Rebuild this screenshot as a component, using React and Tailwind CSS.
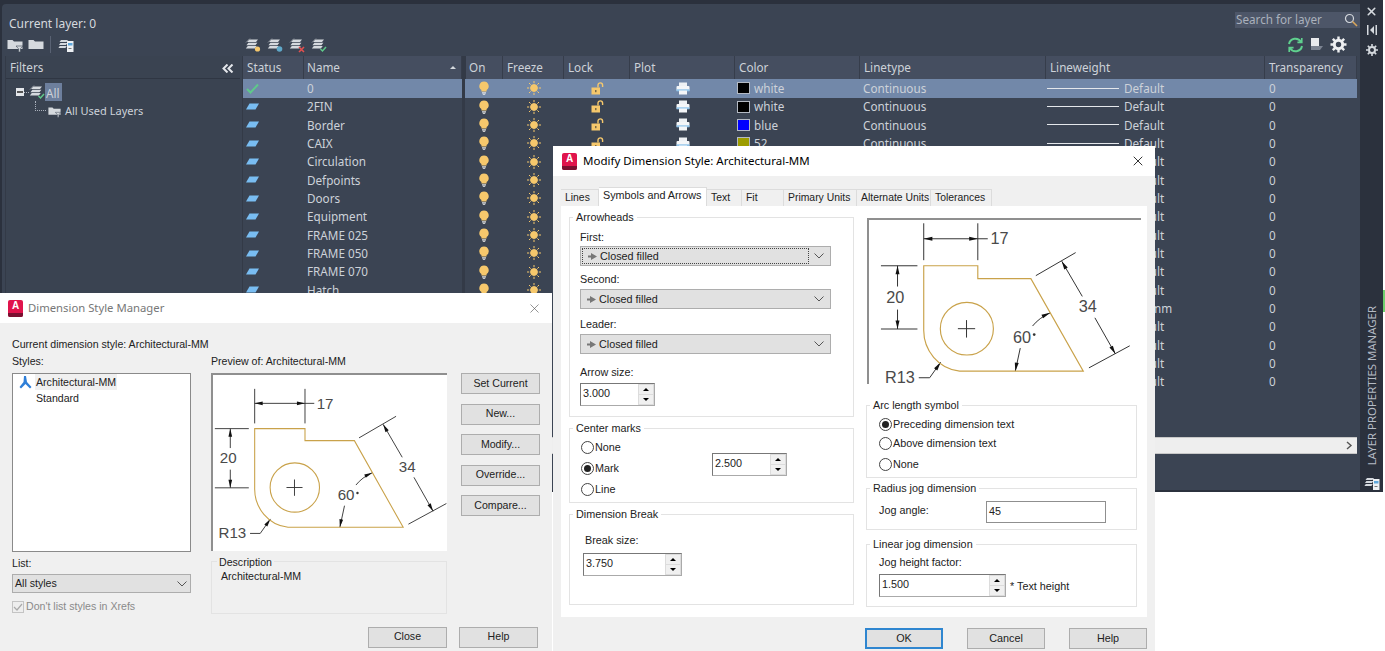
import React from "react";
import { X } from "lucide-react";

const layers = [
  ["0", "white", "bg-black", "Default"],
  ["2FIN", "white", "bg-black", "Default"],
  ["Border", "blue", "bg-[#0000ff]", "Default"],
  ["CAIX", "52", "bg-[#9c9c00]", "Default"],
  ["Circulation", "white", "bg-black", "Default"],
  ["Defpoints", "white", "bg-black", "Default"],
  ["Doors", "white", "bg-black", "Default"],
  ["Equipment", "white", "bg-black", "Default"],
  ["FRAME 025", "white", "bg-black", "Default"],
  ["FRAME 050", "white", "bg-black", "Default"],
  ["FRAME 070", "white", "bg-black", "Default"],
  ["Hatch", "white", "bg-black", "Default"],
  ["", "white", "bg-black", "0.25 mm"],
  ["", "white", "bg-black", "Default"],
  ["", "white", "bg-black", "Default"],
  ["", "white", "bg-black", "Default"],
  ["", "white", "bg-black", "Default"],
];

const COLS = "grid grid-cols-[61px_158px_3px_38px_61px_66px_105px_125px_186px_219px_92px]";

const Bulb = () => (
  <svg width="12" height="14" viewBox="0 0 12 14">
    <path d="M6 0.5a4.7 4.7 0 0 1 2.6 8.6V10.5H3.4V9.1A4.7 4.7 0 0 1 6 0.5z" fill="#f6c86c" />
    <rect x="4" y="11.3" width="4" height="1.2" fill="#e8e8e8" />
    <rect x="4.8" y="12.8" width="2.4" height="1" fill="#e8e8e8" />
  </svg>
);

const Sun = () => (
  <svg width="14" height="14" viewBox="0 0 14 14" stroke="#f6c86c" strokeWidth="1">
    <circle cx="7" cy="7" r="3.4" fill="#f6c86c" />
    <path d="M7 0v2.2M7 11.8V14M0 7h2.2M11.8 7H14M2 2l1.6 1.6M10.4 10.4L12 12M2 12l1.6-1.6M10.4 3.6L12 2" />
  </svg>
);

const OpenLock = () => (
  <svg width="13" height="13" viewBox="0 0 13 13">
    <rect x="0.5" y="5.5" width="8.5" height="7" fill="#f6c86c" />
    <path d="M7 5.5V3.2a2.3 2.3 0 0 1 4.6 0V5" fill="none" stroke="#f6c86c" strokeWidth="1.4" />
    <rect x="4" y="8" width="1.5" height="2.2" fill="#7a6a45" />
  </svg>
);

const Printer = () => (
  <svg width="14" height="13" viewBox="0 0 14 13">
    <rect x="3" y="0.5" width="8" height="3.5" fill="#eef1f4" />
    <rect x="0.5" y="4" width="13" height="5" rx="1" fill="#f4f6f8" />
    <rect x="0.5" y="7.3" width="13" height="2" fill="#8fc4ea" />
    <rect x="3" y="8.5" width="8" height="4" fill="#f4f6f8" />
  </svg>
);

const StatusIcon = ({ current }) =>
  current ? (
    <svg width="13" height="11" viewBox="0 0 13 11">
      <path d="M1 6l3.5 3.5L12 1.5" fill="none" stroke="#5fc98a" strokeWidth="2" />
    </svg>
  ) : (
    <svg width="13" height="7" viewBox="0 0 13 7">
      <path d="M3.5 0.5H13L9.5 6.5H0z" fill="#79bdf2" />
    </svg>
  );

// stacked sheets used all over the layer palette toolbar
const Stack = ({ badge }) => (
  <svg width="16" height="16" viewBox="0 0 16 15">
    <path d="M4 2h9l-2 2.4H2zM3.4 5.3h9l-2 2.4h-9zM2.8 8.6h9l-2 2.4h-9z" fill="#d5d9de" />
    <path d="M1 5L5 1" stroke="#8c929c" strokeWidth="1" />
    {badge === "sun" && <circle cx="12.5" cy="11.5" r="2.6" fill="#f6c86c" />}
    {badge === "globe" && <circle cx="12.5" cy="11.5" r="2.8" fill="#5fa8c9" />}
    {badge === "del" && <path d="M10 9.5l5 5M15 9.5l-5 5" stroke="#e2504f" strokeWidth="1.6" />}
    {badge === "check" && <path d="M9.5 11.5l2 2 3.5-4" fill="none" stroke="#5fc98a" strokeWidth="1.5" />}
  </svg>
);

const Folder = ({ small, filter }) => (
  <svg width={small ? 13 : 16} height={small ? 13 : 14} viewBox="0 0 16 14">
    <path d="M0.5 2h5l1.5 1.5h8.5V11H0.5z" fill="#d5d9de" />
    {filter && <path d="M9 8h7l-2.6 2.8V14h-1.8v-3.2z" fill="#d5d9de" stroke="#3b4453" strokeWidth="0.6" />}
  </svg>
);

const StackDoc = () => (
  <svg width="17" height="16" viewBox="0 0 17 16">
    <path d="M4 3h7L9.5 5H2.5zM3.4 6h7L9 8H2zM2.8 9h7L8.4 11h-7z" fill="#d5d9de" />
    <rect x="10" y="4" width="6.5" height="11" fill="#eef1f4" />
    <rect x="11" y="6" width="4.5" height="2.5" fill="#5fa8dc" />
    <rect x="11.5" y="11" width="3" height="1" fill="#777" />
  </svg>
);

const LayerRow = ({ layer, index }) => {
  const [name, color, swatch, weight] = layer;
  const selected = index === 0;
  const bg = selected ? "bg-[#7288a9]" : "";
  return (
    <div className={`${COLS} h-[18.33px] items-center text-[11.7px] text-[#cdd2d9]`}>
      <div className={`${bg} h-full pl-[3px] flex items-center`}>
        <StatusIcon current={selected} />
      </div>
      <div className={`${bg} h-full pl-[3px] leading-[18.5px]`}>{name}</div>
      <div className="h-full bg-[#333a47]" />
      <div className={`${bg} h-full flex items-center justify-center`}>
        <Bulb />
      </div>
      <div className={`${bg} h-full flex items-center justify-center`}>
        <Sun />
      </div>
      <div className={`${bg} h-full flex items-center justify-center`}>
        <OpenLock />
      </div>
      <div className={`${bg} h-full flex items-center justify-center`}>
        <Printer />
      </div>
      <div className={`${bg} h-full flex items-center gap-[4px] pl-[2px]`}>
        <span className={`${swatch} w-[13px] h-[12px] border border-[#b4bac4]`} />
        <span className="leading-[18.5px]">{color}</span>
      </div>
      <div className={`${bg} h-full pl-[3px] leading-[18.5px]`}>Continuous</div>
      <div className={`${bg} h-full flex items-center`}>
        <span className="ml-[1px] w-[72px] h-px bg-[#e4e7eb]" />
        <span className="ml-[5px] leading-[18.5px]">{weight}</span>
      </div>
      <div className={`${bg} h-full pl-[4px] leading-[18.5px]`}>0</div>
    </div>
  );
};

const LayerPalette = () => {
  const heads = ["Status", "Name", "", "On", "Freeze", "Lock", "Plot", "Color", "Linetype", "Lineweight", "Transparency"];
  return (
    <div className="absolute top-0 left-0 w-[1383px] h-[492px] bg-[#2b313d] flex font-['Noto_Sans',sans-serif]">
      <div className="w-[1360px] pl-[2px] pt-[4px]">
        <div className="w-[1358px] h-[486px] bg-[#3b4453] rounded-tl-[4px] pt-[11px] pl-[7px]">
          {/* top band */}
          <div className="h-[18px] flex items-center justify-between pr-[1px]">
            <span className="text-[12px] text-[#d5d9de]">Current layer: 0</span>
            <div className="w-[125px] h-[16px] -mt-[8px] mr-[-1px] bg-[#4d5668] flex items-center justify-between pl-[1px] pr-[2px] text-[11.7px] text-[#aab1bc]">
              <span>Search for layer</span>
              <svg width="14" height="14" viewBox="0 0 14 14" fill="none">
                <circle cx="5.5" cy="5.5" r="4" stroke="#d5d9de" strokeWidth="1.2" />
                <path d="M8.5 8.5L13 13" stroke="#d9a65a" strokeWidth="1.6" />
              </svg>
            </div>
          </div>
          <div className="h-[23px] flex items-center">
            <div className="w-[234px] flex items-center gap-[4px] -ml-[2px]">
              <Folder filter />
              <span className="ml-[1px]"><Folder /></span>
              <span className="w-px h-[17px] bg-[#596273] mx-[2px]" />
              <StackDoc />
            </div>
            <div className="ml-[4px] flex items-center gap-[6px]">
              <Stack badge="sun" />
              <Stack badge="globe" />
              <Stack badge="del" />
              <Stack badge="check" />
            </div>
            <div className="ml-auto mr-[13px] flex items-center gap-[5px]">
              <svg width="17" height="16" viewBox="0 0 17 16" fill="none" stroke="#5fd08e" strokeWidth="2">
                <path d="M2 7a6.5 6.5 0 0 1 12-2M15 9a6.5 6.5 0 0 1-12 2" />
                <path d="M14.8 1v4.4h-4.4M2.2 15v-4.4h4.4" strokeWidth="1.6" />
              </svg>
              <svg width="16" height="15" viewBox="0 0 16 15">
                <rect x="2" y="1" width="8" height="8" fill="#e8eaed" />
                <path d="M2 9h12l-3 4H2z" fill="#7b8391" />
              </svg>
              <svg width="17" height="17" viewBox="0 0 17 17" fill="none" stroke="#eef0f2">
                <circle cx="8.5" cy="8.5" r="4.2" strokeWidth="3" />
                <path d="M8.5 0.5v3M8.5 13.5v3M0.5 8.5h3M13.5 8.5h3M2.8 2.8l2.1 2.1M12.1 12.1l2.1 2.1M2.8 14.2l2.1-2.1M12.1 4.9l2.1-2.1" strokeWidth="2.4" />
              </svg>
            </div>
          </div>
          {/* filters + table */}
          <div className="flex -ml-[4px]">
            <div className="w-[235px] h-[430px] border-l border-[#333a47] bg-[#3a4351]">
              <div className="h-[23px] flex items-center justify-between pl-[4px] pr-[6px] pt-[2px] text-[11.7px] text-[#cdd2d9] border-b border-[#2f3643]">
                <span>Filters</span>
                <svg width="12" height="9" viewBox="0 0 12 9" fill="none" stroke="#e4e7eb" strokeWidth="2">
                  <path d="M5.500 0.500L1.500 4.500l4 4M10.500 0.500l-4 4 4 4" />
                </svg>
              </div>
              <div className="pl-[10px] pt-[4px] text-[11px] text-[#cdd2d9]">
                <div className="flex items-center h-[18px]">
                  <span className="w-[8px] h-[8px] bg-[#e4e7eb] flex items-center justify-center">
                    <span className="w-[6px] h-[2px] bg-[#555]" />
                  </span>
                  <span className="w-[5px] border-t border-dotted border-[#aab1bc]" />
                  <Stack badge="check" />
                  <span className="w-[17px] pl-[1px] h-[18px] bg-[#6d7f9d] leading-[20px] text-[11.7px]">All</span>
                </div>
                <div className="flex items-center h-[18px] mt-[1px] ml-[19px]">
                  <span className="w-[11px] h-[10px] -mt-[10px] border-l border-b border-dotted border-[#aab1bc]" />
                  <span className="ml-[2px]"><Folder small filter /></span>
                  <span className="ml-[4px]">All Used Layers</span>
                </div>
              </div>
            </div>
            <div className="ml-[2px] w-[1115px] border-l border-[#333a47]">
              <div className={`${COLS} h-[23px] bg-[#454e60] text-[11.7px] text-[#cdd2d9]`}>
                {heads.map((h, i) => (
                  <div key={i} className={`relative flex items-center ${i === 1 ? "pl-[3px]" : "pl-[4px]"} ${i === 2 ? "bg-[#333a47]" : "border-r border-[#363d4b]"}`}>
                    {h}
                    {i === 1 && <span className="absolute right-[5px] top-[10px] w-0 h-0 border-x-[3px] border-x-transparent border-b-[3px] border-b-[#d5d9de]" />}
                  </div>
                ))}
              </div>
              {layers.map((layer, i) => (
                <LayerRow key={i} layer={layer} index={i} />
              ))}
              {/* horizontal scrollbar */}
              <div className="mt-[46px] h-[17px] bg-[#eeeeee] border-y border-[#c8c8c8] flex items-center justify-end pr-[4px] text-[#666]">
                <svg width="7" height="9" viewBox="0 0 7 9" fill="none" stroke="#555" strokeWidth="1.4">
                  <path d="M1 1l4 3.5L1 8" />
                </svg>
              </div>
            </div>
          </div>
        </div>
      </div>
      {/* collapsed side strip */}
      <div className="w-[23px] flex flex-col items-center text-[#d5d9de] pt-[5px]">
        <X size={13} strokeWidth={3} />
        <svg className="mt-[7px]" width="10" height="10" viewBox="0 0 10 10" fill="#d5d9de">
          <rect x="0" y="0" width="1.5" height="10" />
          <rect x="8.5" y="0" width="1.5" height="10" />
          <path d="M7 1v8L3 5z" />
        </svg>
        <svg className="mt-[9px]" width="12" height="12" viewBox="0 0 12 12" fill="none" stroke="#d5d9de">
          <circle cx="6" cy="6" r="3" strokeWidth="2" />
          <path d="M6 0v2.5M6 9.5V12M0 6h2.5M9.5 6H12M1.8 1.8l1.6 1.6M8.6 8.6l1.6 1.6M1.8 10.2l1.6-1.6M8.6 3.4l1.6-1.6" strokeWidth="1.6" />
        </svg>
        <span className="mt-auto mb-[10px] [writing-mode:vertical-rl] rotate-180 text-[11.400px] leading-[23px] text-[#b4bac4] whitespace-nowrap">LAYER PROPERTIES MANAGER</span>
        <span className="mb-[1px]"><StackDoc /></span>
      </div>
    </div>
  );
};

const Logo = () => (
  <div className="w-[15px] h-[17px] rounded-[2px] bg-[#e0144c] overflow-hidden flex flex-col items-center">
    <span className="text-white font-bold text-[10px] leading-[12px] font-['Liberation_Sans',sans-serif]">A</span>
    <span className="mt-auto w-full h-[4px] bg-[#7a1030]" />
  </div>
);

const Arrow = ({ x, y, a }) => <polygon points="0,0 -26,-6 -26,6" fill="#111" transform={`translate(${x} ${y}) rotate(${a})`} />;

// the sample dimensioned part, in one coordinate space for both previews
const DimPreview = ({ viewBox, className }) => (
  <svg viewBox={viewBox} preserveAspectRatio="none" className={`block bg-white ${className}`} fontFamily="'Liberation Sans',sans-serif" fontSize="49" fill="#4a4a4a">
    <g stroke="#333" strokeWidth="3" fill="none">
      <path d="M187 228V340M350 228V340M187 275H380" />
      <path d="M58 357H168M58 549H168M108 357V420M108 490V549" />
      <path d="M525 387L645 317M685 667L808 600M603 343L665 450M703 515L765 625" />
      <path d="M515 540Q535 515 568 500M478 607L463 677" />
      <path d="M172 697H205L238 650" />
      <path d="M290 548H342M316 522V575" />
    </g>
    <Arrow x={187} y={275} a={180} />
    <Arrow x={350} y={275} a={0} />
    <Arrow x={108} y={357} a={-90} />
    <Arrow x={108} y={549} a={90} />
    <Arrow x={603} y={343} a={-120} />
    <Arrow x={765} y={625} a={60} />
    <Arrow x={568} y={500} a={-25} />
    <Arrow x={463} y={677} a={100} />
    <Arrow x={238} y={650} a={-55} />
    <g stroke="#c9a24a" strokeWidth="3.5" fill="none">
      <path d="M187 357H350V396H510L668 677H295A120 125 0 0 1 187 549Z" />
      <circle cx="317" cy="548" r="80" />
    </g>
    <text x="388" y="292">17</text>
    <text x="74" y="470">20</text>
    <text x="654" y="497">34</text>
    <text x="456" y="590">60</text>
    <circle cx="520" cy="566" r="4" fill="#333" />
    <text x="70" y="712">R13</text>
  </svg>
);

const Chevron = () => (
  <svg width="10" height="6" viewBox="0 0 10 6" fill="none" stroke="#555" strokeWidth="1">
    <path d="M0.5 0.5L5 5l4.5-4.5" />
  </svg>
);

const Button = ({ children, className = "w-[79px] border border-[#adadad]" }) => (
  <div className={`h-[21px] bg-[#e1e1e1] flex items-center justify-center text-[#222] ${className}`}>{children}</div>
);

const ArrowSelect = ({ focused }) => (
  <div className="h-[20px] w-[251px] bg-[#e1e1e1] border border-[#adadad] flex items-center pr-[6px]">
    <div className={`h-[16px] flex-1 flex items-center pl-[5px] ml-[1px] mr-[5px] ${focused ? "border border-dotted border-[#444]" : ""}`}>
      <svg width="9" height="7" viewBox="0 0 9 7" className="mr-[3px]">
        <path d="M0 2.5h3V0l6 3.5L3 7V4.5H0z" fill="#777" />
      </svg>
      Closed filled
    </div>
    <Chevron />
  </div>
);

const Spinner = ({ value, width }) => (
  <div className="flex h-[23px] border border-[#aaa] border-t-[#777] border-l-[#777] bg-white">
    <div className={`${width} pl-[2px] leading-[19px] text-[#222]`}>{value}</div>
    <div className="w-[16px] bg-[#dcdcdc] flex flex-col justify-center gap-[1px] px-[1px]">
      <div className="h-[9px] bg-[#f0f0f0] flex items-center justify-center">
        <span className="w-0 h-0 border-x-[3px] border-x-transparent border-b-[3px] border-b-black" />
      </div>
      <div className="h-[9px] bg-[#f0f0f0] flex items-center justify-center">
        <span className="w-0 h-0 border-x-[3px] border-x-transparent border-t-[3px] border-t-black" />
      </div>
    </div>
  </div>
);

const Group = ({ title, className = "", children }) => (
  <div className={`relative border border-[#e3e3e3] ${className}`}>
    <span className="absolute -top-[8px] left-[3px] bg-white px-[3px] leading-[14px] text-[#222]">{title}</span>
    {children}
  </div>
);

const Radio = ({ label, checked, className = "" }) => (
  <div className={`flex items-center gap-[1px] h-[14px] leading-[14px] text-[#222] ${className}`}>
    <span className="w-[13px] h-[13px] rounded-full border border-[#444] bg-white flex items-center justify-center">
      {checked && <span className="w-[7px] h-[7px] rounded-full bg-[#222]" />}
    </span>
    {label}
  </div>
);

const StyleManager = () => (
  <div className="absolute left-0 top-[293px] w-[552px] h-[358px] bg-[#f0f0f0] text-[10.6px] text-[#222] font-['Liberation_Sans',sans-serif]">
    <div className="h-[30px] bg-white flex items-center pl-[8px] pr-[10px]">
      <Logo />
      <span className="ml-[5px] text-[11.3px] text-[#777] font-['Noto_Sans',sans-serif]">Dimension Style Manager</span>
      <X size={15} strokeWidth={1} className="ml-auto text-[#555]" />
    </div>
    <div className="pl-[12px] pt-[14px]">
      <div className="leading-[14px]">Current dimension style: Architectural-MM</div>
      <div className="flex mt-[3px]">
        <div className="w-[179px]">
          <div className="leading-[14px]">Styles:</div>
          <div className="mt-[5px] h-[179px] bg-white border border-[#8a8a8a] pl-[5px]">
            <div className="flex items-center h-[16px]">
              <svg width="14" height="13" viewBox="0 0 14 13" fill="#2f7fd8">
                <path d="M6 0h2l1 6 4.5 5-1.5 1.5L7.5 8 3 12.500 1.500 11l4-5z" />
              </svg>
              <span className="ml-[3px] px-[1px] bg-[#f0f0f0] leading-[16px]">Architectural-MM</span>
            </div>
            <div className="h-[16px] pl-[18px] leading-[16px]">Standard</div>
          </div>
          <div className="mt-[4px] leading-[14px]">List:</div>
          <div className="mt-[4px] h-[19px] bg-[#e1e1e1] border border-[#adadad] flex items-center justify-between pl-[2px] pr-[3px]">
            All styles
            <Chevron />
          </div>
          <div className="mt-[6px] flex items-center gap-[2px] text-[#8a8a8a]">
            <span className="w-[12px] h-[12px] border border-[#c4c4c4] bg-[#eee] flex items-center justify-center">
              <svg width="10" height="8" viewBox="0 0 10 8" fill="none" stroke="#aaa" strokeWidth="1.2">
                <path d="M1 4l3 3 5-6" />
              </svg>
            </span>
            Don't list styles in Xrefs
          </div>
        </div>
        <div className="ml-[20px] w-[236px]">
          <div className="leading-[14px]">Preview of: Architectural-MM</div>
          <div className="mt-[5px] border-t-2 border-l-2 border-[#8f8f8f]">
            <DimPreview viewBox="52 183 758 571" className="w-[234px] h-[176px]" />
          </div>
          <div className="relative mt-[10px] h-[53px] border border-[#e3e3e3]">
            <span className="absolute -top-[6px] left-[5px] bg-[#f0f0f0] px-[2px] leading-[13px]">Description</span>
            <div className="pl-[9px] pt-[7px] leading-[14px]">Architectural-MM</div>
          </div>
        </div>
        <div className="ml-[14px] pt-[19px] flex flex-col gap-[9.500px]">
          <Button>Set Current</Button>
          <Button>New...</Button>
          <Button>Modify...</Button>
          <Button>Override...</Button>
          <Button>Compare...</Button>
        </div>
      </div>
      <div className="flex justify-end gap-[12px] pr-[14px] mt-[12px]">
        <Button>Close</Button>
        <Button>Help</Button>
      </div>
    </div>
  </div>
);

const tabs = [
  ["Lines", "w-[38px]"],
  ["Symbols and Arrows", "w-[108px]"],
  ["Text", "w-[35px]"],
  ["Fit", "w-[42px]"],
  ["Primary Units", "w-[73px]"],
  ["Alternate Units", "w-[74px]"],
  ["Tolerances", "w-[61px]"],
];

const ModifyDialog = () => (
  <div className="absolute left-[553px] top-[146px] w-[602px] h-[505px] bg-[#f0f0f0] text-[10.8px] text-[#222] font-['Liberation_Sans',sans-serif]">
    <div className="h-[30px] bg-white flex items-center pl-[9px] pr-[9px]">
      <Logo />
      <span className="ml-[6px] text-[11.5px] text-black font-['Noto_Sans',sans-serif]">Modify Dimension Style: Architectural-MM</span>
      <X size={16} strokeWidth={1.2} className="ml-auto text-black" />
    </div>
    <div className="pl-[8px] pt-[10px]">
      <div className="flex items-end h-[20px]">
        {tabs.map(([t, w], i) => (
          <div key={t} className={`${w} whitespace-nowrap flex items-center pl-[4px] border-r border-t border-[#dcdcdc] ${i === 1 ? "h-[19px] bg-white pb-[3px] z-10" : "h-[17px] pb-[1px] text-[10.4px] bg-[#f0f0f0]"}`}>
            {t}
          </div>
        ))}
      </div>
      <div className="w-[586px] h-[411px] bg-white flex pl-[8px] pt-[11px] gap-[13px]">
        <div className="w-[285px] flex flex-col gap-[11px]">
          <Group title="Arrowheads" className="h-[200px] px-[10px] pt-[12px]">
            <div className="leading-[14px]">First:</div>
            <div className="mt-[2px]"><ArrowSelect focused /></div>
            <div className="mt-[6px] leading-[14px]">Second:</div>
            <div className="mt-[3px]"><ArrowSelect /></div>
            <div className="mt-[8px] leading-[14px]">Leader:</div>
            <div className="mt-[3px]"><ArrowSelect /></div>
            <div className="mt-[11px] leading-[14px]">Arrow size:</div>
            <div className="mt-[4px] w-fit"><Spinner value="3.000" width="w-[57px]" /></div>
          </Group>
          <Group title="Center marks" className="h-[75px] pl-[11px] pt-[11px] flex">
            <div className="w-[45px] flex flex-col gap-[7px]">
              <Radio label="None" />
              <Radio label="Mark" checked />
              <Radio label="Line" />
            </div>
            <div className="ml-[86px] mt-[13px] w-fit"><Spinner value="2.500" width="w-[57px]" /></div>
          </Group>
          <Group title="Dimension Break" className="h-[91px] pl-[13px] pt-[18px]">
            <div className="pl-[2px] leading-[14px]">Break size:</div>
            <div className="mt-[6px] w-fit"><Spinner value="3.750" width="w-[81px]" /></div>
          </Group>
        </div>
        <div className="w-[274px] pt-[1px]">
          <div className="border-t-2 border-l-2 border-[#8f8f8f] w-[274px]">
            <DimPreview viewBox="22 218 820 498" className="w-[272px] h-[164px]" />
          </div>
          <Group title="Arc length symbol" className="mt-[21px] -ml-[1px] w-[271px] h-[73px] pl-[12px] pt-[11px]">
            <div className="flex flex-col gap-[5px]">
              <Radio label="Preceding dimension text" checked />
              <Radio label="Above dimension text" />
              <Radio className="mt-[2px]" label="None" />
            </div>
          </Group>
          <Group title="Radius jog dimension" className="mt-[10px] -ml-[1px] w-[271px] h-[42px] flex pl-[12px] pt-[12px]">
            <span className="w-[107px] leading-[16px] pt-[1px]">Jog angle:</span>
            <div className="w-[120px] h-[22px] border border-[#8f8f8f] pl-[2px] leading-[18px] bg-white">45</div>
          </Group>
          <Group title="Linear jog dimension" className="mt-[14px] -ml-[1px] w-[271px] h-[63px] pl-[12px] pt-[10px]">
            <div className="leading-[14px]">Jog height factor:</div>
            <div className="mt-[5px] flex items-center gap-[4px]">
              <Spinner value="1.500" width="w-[109px]" />
              <span className="mt-[2px]">* Text height</span>
            </div>
          </Group>
        </div>
      </div>
      <div className="flex pl-[304px] gap-[24px] mt-[11px]">
        <Button className="w-[78px] border-2 border-[#2f86d0]">OK</Button>
        <Button className="w-[78px] border border-[#adadad]">Cancel</Button>
        <Button className="w-[78px] border border-[#adadad]">Help</Button>
      </div>
    </div>
  </div>
);

export default function App() {
  return (
    <div className="relative w-[1385px] h-[651px] overflow-hidden bg-white">
      <LayerPalette />
      <StyleManager />
      <ModifyDialog />
      <span className="absolute left-[1383px] top-[290px] w-[2px] h-[22px] bg-[#6fcf6f]" />
    </div>
  );
}
